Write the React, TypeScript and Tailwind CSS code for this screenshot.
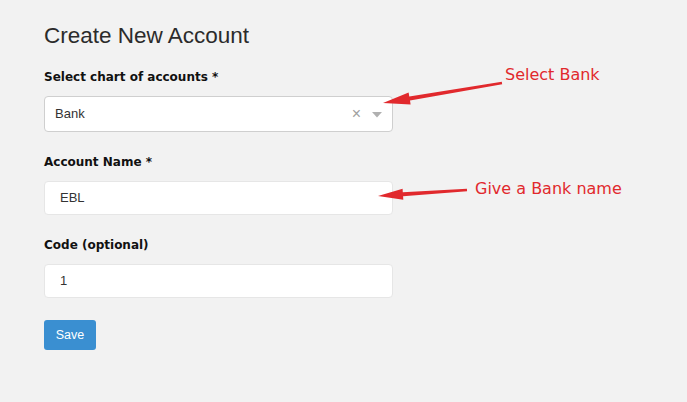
import React from 'react'

type Pt = [number, number]

// tapered skitch-style arrow, points from tail to tip
function arrowPoints(tail: Pt, tip: Pt, headLen: number, headHalf: number, tailW: number, neckW: number) {
  const dx = tip[0] - tail[0]
  const dy = tip[1] - tail[1]
  const len = Math.hypot(dx, dy)
  const ux = dx / len
  const uy = dy / len
  const nx = -uy
  const ny = ux
  const bx = tip[0] - ux * headLen
  const by = tip[1] - uy * headLen
  const pts: Pt[] = [
    [tail[0] + nx * tailW / 2, tail[1] + ny * tailW / 2],
    [bx + nx * neckW / 2, by + ny * neckW / 2],
    [bx + nx * headHalf, by + ny * headHalf],
    tip,
    [bx - nx * headHalf, by - ny * headHalf],
    [bx - nx * neckW / 2, by - ny * neckW / 2],
    [tail[0] - nx * tailW / 2, tail[1] - ny * tailW / 2]
  ]
  return pts.map((p) => `${p[0].toFixed(1)},${p[1].toFixed(1)}`).join(' ')
}

function Field({ label, children }: { label: string; children: React.ReactNode }) {
  return (
    <div className="flex flex-col">
      <label
        className="text-[12px] leading-4 font-bold text-[#111] pt-[1px]"
        style={{ fontFamily: '"DejaVu Sans", Verdana, sans-serif' }}
      >
        {label}
      </label>
      <div className="mt-[11px]">{children}</div>
    </div>
  )
}

export default function App() {
  return (
    <main
      className="relative min-h-[402px] w-full bg-[#f2f2f2] overflow-hidden"
      style={{ fontFamily: '"Liberation Sans", Arial, sans-serif' }}
    >
      <div className="pl-[44px] pt-[23px] w-[393px]">
        <h1 className="text-[22.5px] leading-[26px] text-[#2b2b2b]">Create New Account</h1>

        <div className="mt-[19px] flex flex-col gap-[21px]">
          <Field label="Select chart of accounts *">
            <div className="h-9 bg-white border border-[#cfcfcf] rounded-[4px] flex items-center pl-[10px] pr-[10px]">
              <span className="text-[13px] text-[#333] flex-1">Bank</span>
              <span className="text-[#a0a0a0] text-[16px] leading-none mr-[11px]">×</span>
              <svg width="10" height="6" viewBox="0 0 10 6" className="mt-[1px]">
                <polygon points="0,0 10,0 5,5.5" fill="#b0b0b0" />
              </svg>
            </div>
          </Field>

          <Field label="Account Name *">
            <div className="h-[34px] bg-white border border-[#e6e6e6] rounded-[4px] flex items-center pl-[15px]">
              <span className="text-[13px] text-[#333]">EBL</span>
            </div>
          </Field>

          <Field label="Code (optional)">
            <div className="h-[34px] bg-white border border-[#e6e6e6] rounded-[4px] flex items-center pl-[15px]">
              <span className="text-[13px] text-[#333]">1</span>
            </div>
          </Field>
        </div>

        <button className="mt-[22px] w-[52px] h-[30px] rounded-[3px] bg-[#3a8fd1] text-white text-[12.5px]">
          Save
        </button>
      </div>

      {/* annotations */}
      <span
        className="absolute left-[505px] top-[65px] text-[16px] leading-5 text-[#e1292d]"
        style={{ fontFamily: '"DejaVu Sans", Verdana, sans-serif' }}
      >
        Select Bank
      </span>
      <span
        className="absolute left-[475px] top-[179px] text-[16px] leading-5 text-[#e1292d]"
        style={{ fontFamily: '"DejaVu Sans", Verdana, sans-serif' }}
      >
        Give a Bank name
      </span>
      <svg className="absolute inset-0 pointer-events-none" width="687" height="402">
        <polygon points={arrowPoints([502, 83], [383, 103], 27, 6, 2.5, 4)} fill="#e1292d" />
        <polygon points={arrowPoints([467, 190], [378, 196], 25, 5.5, 2.5, 4)} fill="#e1292d" />
      </svg>
    </main>
  )
}
